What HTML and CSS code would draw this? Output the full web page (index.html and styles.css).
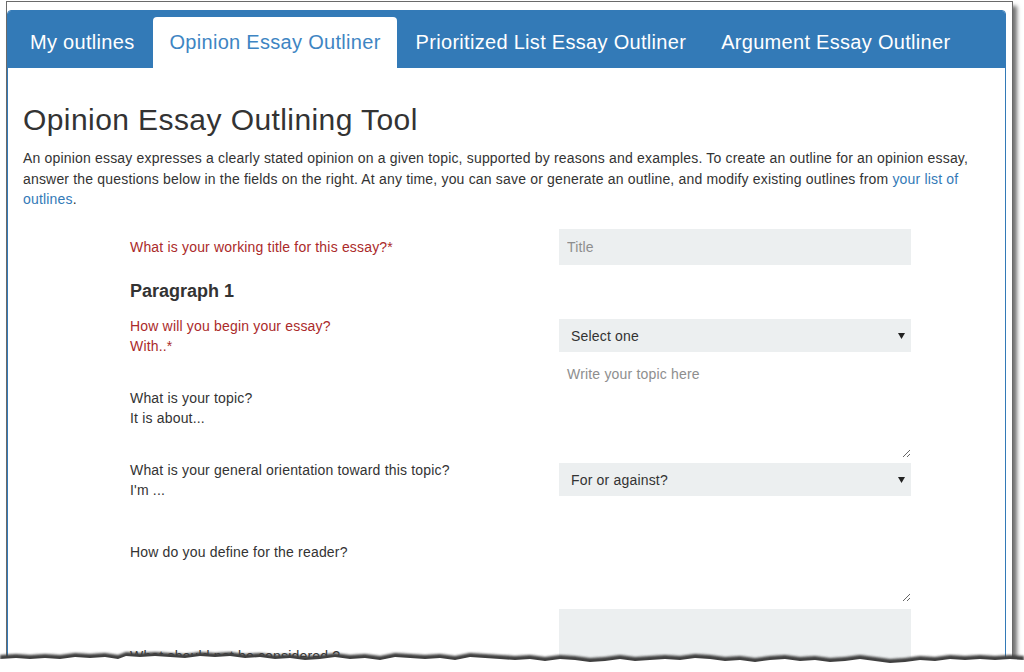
FILE: index.html
```html
<!DOCTYPE html>
<html lang="en">
<head>
<meta charset="utf-8">
<title>Opinion Essay Outlining Tool</title>
<link rel="stylesheet" href="styles.css">
</head>
<body>
<div class="shot">
  <div class="panel">
    <div class="panel-heading">
      <ul class="tabs">
        <li class="tab">My outlines</li>
        <li class="tab active">Opinion Essay Outliner</li>
        <li class="tab">Prioritized List Essay Outliner</li>
        <li class="tab">Argument Essay Outliner</li>
      </ul>
    </div>
    <div class="panel-body">
      <h1 class="title">Opinion Essay Outlining Tool</h1>
      <p class="intro">An opinion essay expresses a clearly stated opinion on a given topic, supported by reasons and examples. To create an outline for an opinion essay, answer the questions below in the fields on the right. At any time, you can save or generate an outline, and modify existing outlines from <a href="#" class="link">your list of outlines</a>.</p>

      <form class="outline-form">
        <div class="field">
          <label class="label required" for="title">What is your working title for this essay?*</label>
          <input id="title" class="input" type="text" placeholder="Title">
        </div>

        <h3 class="section">Paragraph 1</h3>

        <div class="field">
          <label class="label required" for="begin">How will you begin your essay?<br>With..*</label>
          <select id="begin" class="select"><option>Select one</option></select>
        </div>
        <div class="field">
          <label class="label" for="topic">What is your topic?<br>It is about...</label>
          <textarea id="topic" class="textarea" placeholder="Write your topic here"></textarea>
        </div>
        <div class="field">
          <label class="label" for="orient">What is your general orientation toward this topic?<br>I'm ...</label>
          <select id="orient" class="select"><option>For or against?</option></select>
        </div>
        <div class="field">
          <label class="label" for="define">How do you define for the reader?</label>
          <textarea id="define" class="textarea"></textarea>
        </div>
        <div class="field spaced">
          <label class="label" for="exclude">What should not be considered ?</label>
          <textarea id="exclude" class="textarea shaded"></textarea>
        </div>
      </form>
    </div>
  </div>
</div>

<svg class="tear" width="1024" height="28" viewBox="0 0 1024 28" aria-hidden="true">
  <defs>
    <filter id="soft" x="-5%" y="-50%" width="110%" height="200%">
      <feGaussianBlur stdDeviation="0.9"/>
    </filter>
  </defs>
  <path filter="url(#soft)" fill="#3f3f3f" d="M0,11 L16,10 L30,11 L45,10 L60,11 L75,9 L90,10 L105,9 L118,11 L126,8 L140,9 L155,8 L170,9 L185,10 L200,8 L215,9 L230,8 L245,10 L260,9 L275,11 L290,10 L305,12 L320,11 L335,9 L350,11 L365,10 L380,12 L395,9 L410,10 L425,11 L440,10 L455,12 L470,9 L485,10 L500,11 L515,12 L530,11 L545,13 L560,11 L575,12 L590,14 L605,13 L620,11 L635,13 L650,12 L665,11 L680,12 L695,10 L710,11 L725,13 L740,12 L755,14 L770,12 L785,11 L800,13 L815,12 L830,14 L845,13 L860,11 L875,13 L890,15 L905,14 L920,12 L935,13 L950,11 L965,12 L980,11 L995,12 L1010,11 L1024,12 L1024,28 L0,28 Z"/>
  <path fill="#ffffff" d="M0,15 L16,14 L30,15 L45,14 L60,15 L75,13 L90,14 L105,13 L118,15 L126,12 L140,13 L155,12 L170,13 L185,14 L200,12 L215,13 L230,12 L245,14 L260,13 L275,15 L290,14 L305,16 L320,15 L335,13 L350,15 L365,14 L380,16 L395,13 L410,14 L425,15 L440,14 L455,16 L470,13 L485,14 L500,15 L515,16 L530,15 L545,17 L560,15 L575,16 L590,18 L605,17 L620,15 L635,17 L650,16 L665,15 L680,16 L695,14 L710,15 L725,17 L740,16 L755,18 L770,16 L785,15 L800,17 L815,16 L830,18 L845,17 L860,15 L875,17 L890,19 L905,18 L920,16 L935,17 L950,15 L965,16 L980,15 L995,16 L1010,15 L1024,16 L1024,28 L0,28 Z"/>
</svg>
</body>
</html>
```

FILE: styles.css
```css
html, body {
  margin: 0;
  padding: 0;
  background: #ffffff;
}

body {
  position: relative;
  width: 1024px;
  height: 672px;
  overflow: hidden;
  font-family: "Liberation Sans", Arial, Helvetica, sans-serif;
  font-size: 14px;
  line-height: 20px;
  letter-spacing: 0.18px;
  color: #333333;
}

/* framed window */
.shot {
  box-sizing: border-box;
  margin: 1px 0 0 6px;
  width: 1007px;
  height: 720px;
  padding: 8px 6px 0 0;
  border: 1px solid #6a6a6a;
  background: #ffffff;
  box-shadow: 4px 5px 4px rgba(0, 0, 0, 0.55);
}

.panel {
  border: 1px solid #337ab7;
  border-radius: 4px 4px 0 0;
  height: 100%;
  background: #ffffff;
}

.panel-heading {
  background: #337ab7;
  padding: 6px 0 0 6px;
  border-radius: 3px 3px 0 0;
}

.tabs {
  display: flex;
  margin: 0;
  padding: 0;
  list-style: none;
}

.tab {
  padding: 0 16px;
  margin-right: 3px;
  height: 51px;
  line-height: 51px;
  font-size: 20px;
  letter-spacing: 0.3px;
  color: #ffffff;
  white-space: nowrap;
}

.tab.active {
  background: #ffffff;
  color: #3e85c3;
  border-radius: 4px 4px 0 0;
}

.panel-body {
  padding: 15px 15px;
}

.title {
  margin: 20px 0 12px;
  font-size: 30px;
  font-weight: normal;
  line-height: 33px;
  letter-spacing: 0.42px;
  color: #333333;
}

.intro {
  margin: 0 0 19px;
  line-height: 20.5px;
}

.link {
  color: #337ab7;
  text-decoration: none;
}

.outline-form {
  margin-left: 107px;
}

.field {
  display: grid;
  grid-template-columns: 415px 352px;
  column-gap: 14px;
  align-items: center;
}

.field + .field {
  margin-top: 2px;
}

.field.spaced {
  margin-top: 7px;
}

.label {
  color: #333333;
}

.label.required {
  color: #ab2a2a;
}

.section {
  margin: 16px 0 15px;
  font-size: 18px;
  line-height: 20px;
  font-weight: bold;
  letter-spacing: 0;
  color: #333333;
}

.input,
.select,
.textarea {
  box-sizing: border-box;
  width: 352px;
  margin: 0;
  border: none;
  border-radius: 0;
  font-family: "Liberation Sans", Arial, Helvetica, sans-serif;
  font-size: 14px;
  letter-spacing: 0.18px;
  color: #333333;
  outline: none;
}

.input {
  height: 36px;
  padding: 0 8px;
  background: #eceff0;
}

.select {
  -webkit-appearance: none;
  appearance: none;
  height: 33px;
  padding: 0 12px;
  background: #eceff0 url("data:image/svg+xml;utf8,<svg xmlns='http://www.w3.org/2000/svg' width='7' height='6'><path d='M0 0 L7 0 L3.5 6 Z' fill='%23222'/></svg>") no-repeat right 6px center;
}

.textarea {
  display: block;
  height: 100px;
  padding: 6px 8px;
  line-height: 20px;
  background: #ffffff;
  resize: vertical;
}

.textarea.shaded {
  height: 94px;
  background: #eceff0;
}

.input::placeholder,
.textarea::placeholder {
  color: #8e8e8e;
}

/* torn lower edge of the frame */
.tear {
  position: absolute;
  left: 0;
  top: 644px;
  display: block;
}
```
